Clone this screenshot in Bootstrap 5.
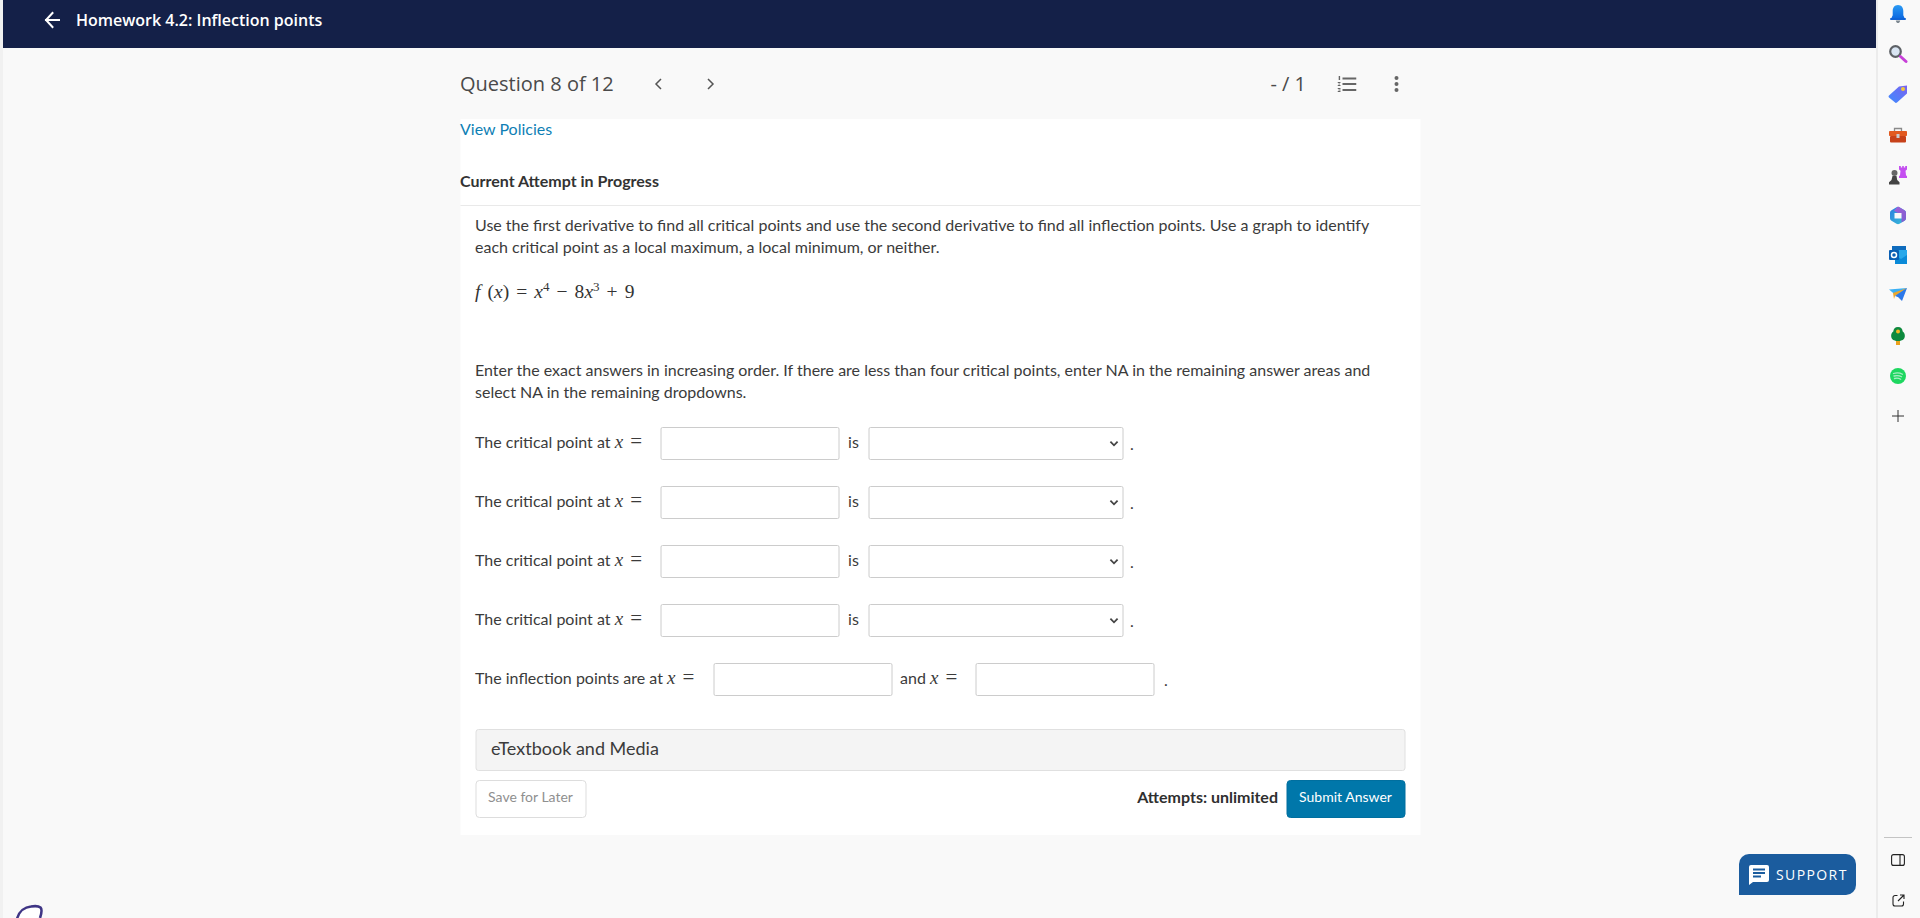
<!DOCTYPE html>
<html lang="en">
<head>
<meta charset="utf-8">
<title>Homework 4.2: Inflection points</title>
<link href="https://cdn.jsdelivr.net/npm/bootstrap@5.3.0/dist/css/bootstrap.min.css" rel="stylesheet">
<style>
html,body{height:918px;overflow:hidden}
body{background:#f9f9f9;font-family:"Lato","Liberation Sans",sans-serif;font-size:16px;color:#3b3b3b;line-height:22px}
.shell{height:918px;position:relative}
.edge-strip{width:3px;background:#f1f1f1;flex:none}
.main-pane{flex:1 1 auto;min-width:0}
.top-bar{height:48px;background:#142048;padding:0 0 8px 41px;gap:16px;font-family:"Open Sans",sans-serif;font-weight:600;color:#fff;font-size:16px}
.sheet{width:960px;margin:0 auto;transform:translateX(.5px)}
.q-head{height:71px;color:#4a4a4a}
.q-title{font-family:"Open Sans",sans-serif;font-size:20px;width:153px;white-space:nowrap}
.q-nav{width:52px;display:flex;justify-content:center}
.q-nav-first{margin-left:19px}
.q-score{font-family:"Open Sans",sans-serif;font-size:20px;margin-right:31px}
.list-ico{margin-right:37px}
.kebab-gap{width:21px}
.q-body{background:#fff;height:716px}
.policy-link{color:#0f7fb5;text-decoration:none;display:block;line-height:20px;height:54px}
.attempt-head{font-weight:700;font-size:16px;color:#333;border-bottom:1px solid #e9e9e9;height:33px;line-height:1}
.q-inner{padding:0 15px}
.q-para{margin:0;font-size:16px}
.formula{font-family:"Liberation Serif",serif;font-size:19.5px;margin:23px 0 54px;height:24px;word-spacing:2.2px;color:#333}
.formula i{font-family:"Liberation Serif",serif;font-style:italic}
.formula sup{font-size:13px;top:-.55em}
.vx{font-family:"Liberation Serif",serif;font-style:italic;font-size:19px}
.vx-eq{font-family:"Liberation Serif",serif;font-size:21px;margin-left:3px}
.ans-row{height:33px;margin-bottom:26px;font-size:16px;white-space:nowrap}
.ans-text{padding-bottom:5px}
.lbl-a{width:185px}
.lbl-b{width:238px}
.lbl-c{width:83px}
.ans-input{width:179px;height:33px;border:1px solid #ccc;border-radius:2px;flex:none;padding:0 6px}
.ans-is{width:29px;text-align:center;padding-bottom:3px}
.ans-sel{width:255px;height:33px;border:1px solid #ccc;border-radius:2px;flex:none;padding:0 6px;background-color:#fff;background-position:right 3px center;background-size:11px 9px;background-image:url("data:image/svg+xml,%3csvg xmlns='http://www.w3.org/2000/svg' viewBox='0 0 12 10'%3e%3cpath fill='none' stroke='%23444' stroke-width='2' d='M2 3l4 4 4-4'/%3e%3c/svg%3e")}
.ans-dot{margin-left:7px}
.ans-dot-wide{margin-left:6px}
.media-bar{height:42px;background:#f4f4f4;border:1px solid #e0e0e0;border-radius:3px;margin-top:33px;padding:0 0 5px 15px;font-size:18px;color:#3b3b3b}
.act-row{margin-top:9px}
.btn-later{height:38px;width:111px;border:1px solid #ddd;border-radius:4px;color:#8f8f8f;font-size:14px;background:#fff;padding:0 0 5px}
.attempts{font-weight:700;font-size:16px;color:#2f2f2f;margin:0 8px 5px 0}
.btn-submit{height:38px;width:119px;background:#0077aa;border:1px solid #006f9f;border-radius:4px;color:#fff;font-size:14px;padding:0 0 5px}
.side-rail{width:44px;flex:none;background:#f9f9f9;border-left:2px solid #ececec;height:918px;position:relative}
.rail-icons{margin:-6px 0 0 -2px}
.rail-slot{height:40.2px}
.rail-low{position:absolute;left:0;right:0;top:837px}
.rail-rule{width:28px;height:1px;background:#c4c4c4;margin:0 auto 2px 6px}
.rail-low-slot{height:40px;margin-left:-2px}
.support-btn{position:absolute;left:1739px;top:854px;width:117px;height:41px;background:#1b5c9e;border-radius:10px 10px 10px 0;color:#fff;font-family:"Open Sans",sans-serif;font-size:14px;letter-spacing:1.4px;gap:7px;padding-left:10px}
.doodle{position:absolute;left:16px;top:904px}
</style>
</head>
<body>
<div class="shell d-flex">
  <div class="edge-strip"></div>
  <div class="main-pane">
    <div class="top-bar d-flex align-items-center">
      <svg width="16" height="18" viewBox="0 0 16 18" fill="none" stroke="#fff" stroke-width="2" stroke-linecap="square"><path d="M15 9H2M8.500 2 2 9l6.500 7"/></svg>
      <span>Homework 4.2: Inflection points</span>
    </div>
    <div class="sheet">
      <div class="q-head d-flex align-items-center">
        <span class="q-title">Question 8 of 12</span>
        <span class="q-nav q-nav-first"><svg width="10" height="14" viewBox="0 0 10 14" fill="none" stroke="#555" stroke-width="1.500"><path d="M7.500 2 2.500 7l5 5"/></svg></span>
        <span class="q-nav"><svg width="10" height="14" viewBox="0 0 10 14" fill="none" stroke="#555" stroke-width="1.500"><path d="M2.500 2l5 5-5 5"/></svg></span>
        <span class="q-score ms-auto">- / 1</span>
        <svg width="19" height="16" viewBox="0 0 19 16" fill="#666" class="list-ico flex-none"><rect x="5" y="1.500" width="14" height="2"/><rect x="5" y="7" width="14" height="2"/><rect x="5" y="13" width="14" height="2"/><rect x="1.200" y="0" width="1.400" height="4"/><rect x="0" y="6" width="3" height="1"/><rect x="0" y="9" width="3" height="1"/><rect x="1" y="7.500" width="1.400" height="1"/><rect x="0" y="12" width="3" height="1"/><rect x="0" y="15" width="3" height="1"/><rect x="1" y="13.500" width="2" height="1"/></svg>
        <svg width="6" height="18" viewBox="0 0 6 18" fill="#666"><circle cx="3" cy="3" r="2"/><circle cx="3" cy="9" r="2"/><circle cx="3" cy="15" r="2"/></svg>
        <span class="kebab-gap"></span>
      </div>
      <div class="q-body">
        <a class="policy-link" href="#">View Policies</a>
        <div class="attempt-head">Current Attempt in Progress</div>
        <div class="q-inner pt-2">
          <p class="q-para">Use the first derivative to find all critical points and use the second derivative to find all inflection points. Use a graph to identify each critical point as a local maximum, a local minimum, or neither.</p>
          <div class="formula"><i>f</i> (<i>x</i>) = <i>x</i><sup>4</sup> − 8<i>x</i><sup>3</sup> + 9</div>
          <p class="q-para mb-4">Enter the exact answers in increasing order. If there are less than four critical points, enter NA in the remaining answer areas and select NA in the remaining dropdowns.</p>
          <div class="ans-row d-flex align-items-center"><span class="lbl-a ans-text">The critical point at <span class="vx">x</span> <span class="vx-eq">=</span></span><input class="ans-input form-control" aria-label="x"><span class="ans-is">is</span><select class="ans-sel form-select" aria-label="type"><option></option></select><span class="ans-dot">.</span></div>
          <div class="ans-row d-flex align-items-center"><span class="lbl-a ans-text">The critical point at <span class="vx">x</span> <span class="vx-eq">=</span></span><input class="ans-input form-control" aria-label="x"><span class="ans-is">is</span><select class="ans-sel form-select" aria-label="type"><option></option></select><span class="ans-dot">.</span></div>
          <div class="ans-row d-flex align-items-center"><span class="lbl-a ans-text">The critical point at <span class="vx">x</span> <span class="vx-eq">=</span></span><input class="ans-input form-control" aria-label="x"><span class="ans-is">is</span><select class="ans-sel form-select" aria-label="type"><option></option></select><span class="ans-dot">.</span></div>
          <div class="ans-row d-flex align-items-center"><span class="lbl-a ans-text">The critical point at <span class="vx">x</span> <span class="vx-eq">=</span></span><input class="ans-input form-control" aria-label="x"><span class="ans-is">is</span><select class="ans-sel form-select" aria-label="type"><option></option></select><span class="ans-dot">.</span></div>
          <div class="ans-row d-flex align-items-center"><span class="lbl-b ans-text">The inflection points are at <span class="vx">x</span> <span class="vx-eq">=</span></span><input class="ans-input form-control" aria-label="x"><span class="lbl-c ps-2 ans-text">and <span class="vx">x</span> <span class="vx-eq">=</span></span><input class="ans-input form-control" aria-label="x"><span class="ans-dot-wide">&nbsp;.</span></div>
          <div class="media-bar d-flex align-items-center">eTextbook and Media</div>
          <div class="act-row d-flex align-items-center">
            <button class="btn btn-later" type="button">Save for Later</button>
            <span class="attempts ms-auto">Attempts: unlimited</span>
            <button class="btn btn-submit" type="button">Submit Answer</button>
          </div>
        </div>
      </div>
    </div>
  </div>
  <aside class="side-rail">
    <div class="rail-icons">
      <div class="rail-slot d-flex align-items-center justify-content-center">
        <svg width="18" height="20" viewBox="0 0 18 20"><defs><linearGradient id="bg" x1="0" y1="0" x2="0" y2="1"><stop offset="0" stop-color="#2b9bf4"/><stop offset="1" stop-color="#0a66e0"/></linearGradient></defs><path d="M9 1c3.600 0 5.300 2.800 5.300 6v4.200L16 15H2l1.700-3.800V7C3.700 3.800 5.400 1 9 1z" fill="url(#bg)"/><rect x="1" y="14" width="16" height="2" rx="1" fill="#0f62d6"/><path d="M6.800 16.500h4.400C10.800 18.600 9.900 19 9 19s-1.800-.4-2.200-2.500z" fill="#7c8790"/></svg>
      </div>
      <div class="rail-slot d-flex align-items-center justify-content-center">
        <svg width="20" height="20" viewBox="0 0 20 20"><circle cx="7.500" cy="7.500" r="5.300" fill="#d9e5f2" stroke="#5d6166" stroke-width="2.200"/><path d="M12.500 12.500l5.500 5" stroke="#c740d8" stroke-width="3" stroke-linecap="round"/></svg>
      </div>
      <div class="rail-slot d-flex align-items-center justify-content-center">
        <svg width="20" height="18" viewBox="0 0 20 18"><defs><linearGradient id="tg" x1="0" y1="1" x2="1" y2="0"><stop offset="0" stop-color="#3f8bff"/><stop offset="1" stop-color="#7a63f0"/></linearGradient></defs><path d="M1 10.500 11 1.500l8-1v8L9 17.500c-.8.600-1.600.500-2.200-.2L1 12.600c-.6-.7-.6-1.500 0-2.100z" fill="url(#tg)"/><circle cx="15" cy="4" r="2" fill="#f2c73e"/></svg>
      </div>
      <div class="rail-slot d-flex align-items-center justify-content-center">
        <svg width="20" height="16" viewBox="0 0 20 16"><path d="M6.500 4V1.500h7V4" fill="none" stroke="#8a8a8a" stroke-width="1.300"/><rect x="1" y="4" width="18" height="5" rx=".8" fill="#e25a20"/><rect x="2" y="9" width="16" height="6.500" rx="1" fill="#c7421a"/><rect x="8.500" y="7" width="3" height="4" fill="#c9ccd0"/></svg>
      </div>
      <div class="rail-slot d-flex align-items-center justify-content-center">
        <svg width="20" height="20" viewBox="0 0 20 20"><path d="M11 1h1.800v1.500h1.400V1h1.600v1.500h1.400V1H19v3.500l-1.500 1.200.5 4.500 1 1V13h-8v-1.800l1-1 .5-4.500L11 4.500z" fill="#c44ff0"/><circle cx="6.500" cy="8" r="3" fill="#666"/><path d="M4.500 11h4l.7 4 2.300 2.200V19.500H1V17.200L3.500 15z" fill="#444"/></svg>
      </div>
      <div class="rail-slot d-flex align-items-center justify-content-center">
        <svg width="18" height="19" viewBox="0 0 18 19"><defs><linearGradient id="ma" x1="0" y1="0" x2="1" y2="1"><stop offset="0" stop-color="#2b7de0"/><stop offset="1" stop-color="#39c0d8"/></linearGradient><linearGradient id="mb" x1="0" y1="0" x2="1" y2="1"><stop offset="0" stop-color="#a45fd8"/><stop offset="1" stop-color="#7e5fd0"/></linearGradient></defs><path d="M7.500 1.200q1.500-.8 3 0l5 3q1.500.9 1.500 2.600v5.400q0 1.700-1.500 2.600l-5 3q-1.500.8-3 0l-5-3Q1 13.900 1 12.200V6.800q0-1.700 1.500-2.600z" fill="url(#ma)"/><path d="M9 .6 15.500 4.200Q17 5 17 6.800v5.400q0 1.700-1.500 2.600l-3 1.800V9L5 4.700z" fill="url(#mb)"/><path d="M5.500 7h7v5.500h-7z" fill="#f9f9f9"/></svg>
      </div>
      <div class="rail-slot d-flex align-items-center justify-content-center">
        <svg width="18" height="18" viewBox="0 0 18 18"><rect x="3" y="0" width="14" height="8" fill="#0f6cbd"/><rect x="6" y="4" width="12" height="13" fill="#28a8ea"/><path d="M6 9l6 4 6-4v9H6z" fill="#0a8ad8"/><rect x="0" y="4" width="10" height="10" rx="1" fill="#0a5fb4"/><circle cx="5" cy="9" r="2.500" fill="none" stroke="#fff" stroke-width="1.500"/></svg>
      </div>
      <div class="rail-slot d-flex align-items-center justify-content-center">
        <svg width="18" height="14" viewBox="0 0 18 14"><path d="M0 1.500 18 0 9 9z" fill="#3ab0f5"/><path d="M4 5 18 0 6 8 5 11z" fill="#eca62d"/><path d="M6 8 18 0l-5 13-4-4z" fill="#2c78ea"/></svg>
      </div>
      <div class="rail-slot d-flex align-items-center justify-content-center">
        <svg width="16" height="18" viewBox="0 0 16 18"><rect x="6" y="12.500" width="4" height="5.500" fill="#eba21e"/><path d="M8 0c3 0 4.500 2 4.700 4.500C14.500 5.500 15 7.500 14.800 9.500 14.500 12.500 12 14 8 14S1.500 12.500 1.200 9.500C1 7.500 1.500 5.500 3.300 4.500 3.500 2 5 0 8 0z" fill="#0e8a3e"/><circle cx="8" cy="4.500" r="2" fill="#f4b823"/></svg>
      </div>
      <div class="rail-slot d-flex align-items-center justify-content-center">
        <svg width="16" height="16" viewBox="0 0 16 16"><circle cx="8" cy="8" r="8" fill="#1ed760"/><path d="M3.500 5.500c3-.9 6.300-.7 9 .8M4 8c2.500-.7 5.300-.5 7.600.8M4.500 10.500c2-.5 4.300-.4 6.200.7" fill="none" stroke="#a8edc2" stroke-width="1.300" stroke-linecap="round"/></svg>
      </div>
      <div class="rail-slot d-flex align-items-center justify-content-center">
        <svg width="14" height="14" viewBox="0 0 14 14"><path d="M7 1v12M1 7h12" stroke="#333" stroke-width="1"/></svg>
      </div>
    </div>
    <div class="rail-low">
      <div class="rail-rule"></div>
      <div class="rail-low-slot d-flex align-items-center justify-content-center">
        <svg width="14" height="12" viewBox="0 0 14 12" fill="none" stroke="#222" stroke-width="1.100"><rect x=".6" y=".6" width="12.800" height="10.800" rx="2"/><path d="M9 .6v10.800"/></svg>
      </div>
      <div class="rail-low-slot d-flex align-items-center justify-content-center">
        <svg width="13" height="13" viewBox="0 0 13 13" fill="none" stroke="#222" stroke-width="1.100"><path d="M5.500 1.500H3a2 2 0 0 0-2 2V10a2 2 0 0 0 2 2h6.500a2 2 0 0 0 2-2V7.500M8 1h4v4M12 1 6 7"/></svg>
      </div>
    </div>
  </aside>
  <div class="support-btn d-flex align-items-center">
    <svg width="20" height="20" viewBox="0 0 20 20"><path d="M2 0h16a2 2 0 0 1 2 2v13a2 2 0 0 1-2 2H4l-4 3V2a2 2 0 0 1 2-2z" fill="#fff"/><path d="M4 4.500h12M4 8h12M4 11.500h8" stroke="#1b5c9e" stroke-width="1.800"/></svg>
    <span>SUPPORT</span>
  </div>
  <svg class="doodle" width="34" height="14" viewBox="0 0 34 14" fill="none"><path d="M1 15C3 7 9 3 15 2.500c4-.7 7-1 9.500 1 1.500 1.500 1 6-.5 10.500" fill="#fff" stroke="#3f3585" stroke-width="2.600"/></svg>
</div>
</body>
</html>
